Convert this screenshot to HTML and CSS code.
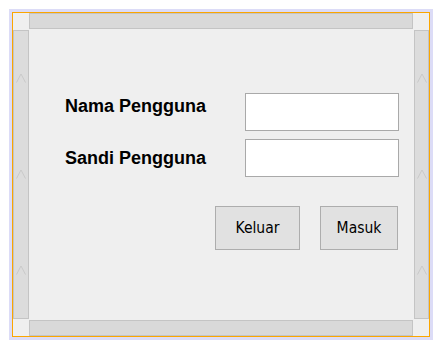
FILE: index.html
```html
<!DOCTYPE html>
<html lang="id">
<head>
<meta charset="utf-8">
<title>Login</title>
<link rel="stylesheet" href="styles.css">
</head>
<body>
<div class="frame">
  <div class="window">
    <div class="corner"></div>
    <div class="hbar top"></div>
    <div class="gap"></div>
    <div class="corner"></div>

    <div class="vbar left">
      <svg class="chev" viewBox="0 0 10 10"><polyline points="0.5,9.5 5,1 9.5,9.5"/></svg>
      <svg class="chev" viewBox="0 0 10 10"><polyline points="0.5,9.5 5,1 9.5,9.5"/></svg>
      <svg class="chev" viewBox="0 0 10 10"><polyline points="0.5,9.5 5,1 9.5,9.5"/></svg>
    </div>
    <div class="main">
      <div class="form">
        <div class="labels">
          <div class="label">Nama Pengguna</div>
          <div class="label">Sandi Pengguna</div>
        </div>
        <div class="inputs">
          <input class="field" type="text">
          <input class="field" type="password">
        </div>
      </div>
      <div class="actions">
        <button class="btn btn-exit">Keluar</button>
        <button class="btn btn-login">Masuk</button>
      </div>
    </div>
    <div class="gap"></div>
    <div class="vbar right">
      <svg class="chev" viewBox="0 0 10 10"><polyline points="0.5,9.5 5,1 9.5,9.5"/></svg>
      <svg class="chev" viewBox="0 0 10 10"><polyline points="0.5,9.5 5,1 9.5,9.5"/></svg>
      <svg class="chev" viewBox="0 0 10 10"><polyline points="0.5,9.5 5,1 9.5,9.5"/></svg>
    </div>

    <div class="corner"></div>
    <div class="hbar bottom"></div>
    <div class="gap"></div>
    <div class="corner"></div>
  </div>
</div>
</body>
</html>
```

FILE: styles.css
```css
html, body {
  margin: 0;
  padding: 0;
  background: #ffffff;
}

body {
  padding: 9px;
  font-family: "Liberation Sans", Arial, sans-serif;
}

.frame {
  width: 424px;
  height: 331px;
  box-sizing: border-box;
  padding: 3px;
  background: #dcdcf7;
}

.window {
  width: 418px;
  height: 325px;
  box-sizing: border-box;
  border: 1px solid #fba600;
  background: #efefef;
  display: grid;
  grid-template-columns: 16px 384px 1px 15px;
  grid-template-rows: 16px 290px 17px;
}

.corner, .gap {
  background: transparent;
}

.hbar {
  box-sizing: border-box;
  background: #d9d9d9;
  border: 1px solid #c4c4c4;
}

.hbar.top {
  height: 16px;
}

.hbar.bottom {
  height: 16px;
  margin-top: 1px;
}

.vbar {
  box-sizing: border-box;
  margin-top: 1px;
  height: 289px;
  background: #dcdcdc;
  border: 1px solid #c4c4c4;
  display: flex;
  flex-direction: column;
  align-items: center;
  padding-top: 42px;
  gap: 86px;
}

.chev {
  width: 10px;
  height: 10px;
  display: block;
  fill: none;
  stroke: #c9c9c9;
  stroke-width: 1;
}

.main {
  margin-top: 1px;
  box-sizing: border-box;
  padding: 63px 14px 0 36px;
  display: flex;
  flex-direction: column;
}

.form {
  display: flex;
  justify-content: space-between;
}

.labels {
  display: flex;
  flex-direction: column;
  gap: 31px;
  padding-top: 2.5px;
}

.label {
  font-size: 18px;
  font-weight: bold;
  line-height: 21px;
  color: #000000;
  white-space: nowrap;
}

.inputs {
  display: flex;
  flex-direction: column;
  gap: 8px;
}

.field {
  box-sizing: border-box;
  width: 154px;
  height: 38px;
  margin: 0;
  border: 1px solid #a9a9a9;
  background: #ffffff;
  outline: none;
  padding: 0 4px;
}

.actions {
  display: flex;
  justify-content: flex-end;
  gap: 20px;
  margin-top: 29px;
  padding-right: 1px;
}

.btn {
  box-sizing: border-box;
  height: 44px;
  margin: 0;
  padding: 0;
  background: #e1e1e1;
  border: 1px solid #adadad;
  font-family: "DejaVu Sans Condensed", "DejaVu Sans", sans-serif;
  font-size: 15.5px;
  color: #000000;
}

.btn-exit {
  width: 85px;
}

.btn-login {
  width: 78px;
}
```
